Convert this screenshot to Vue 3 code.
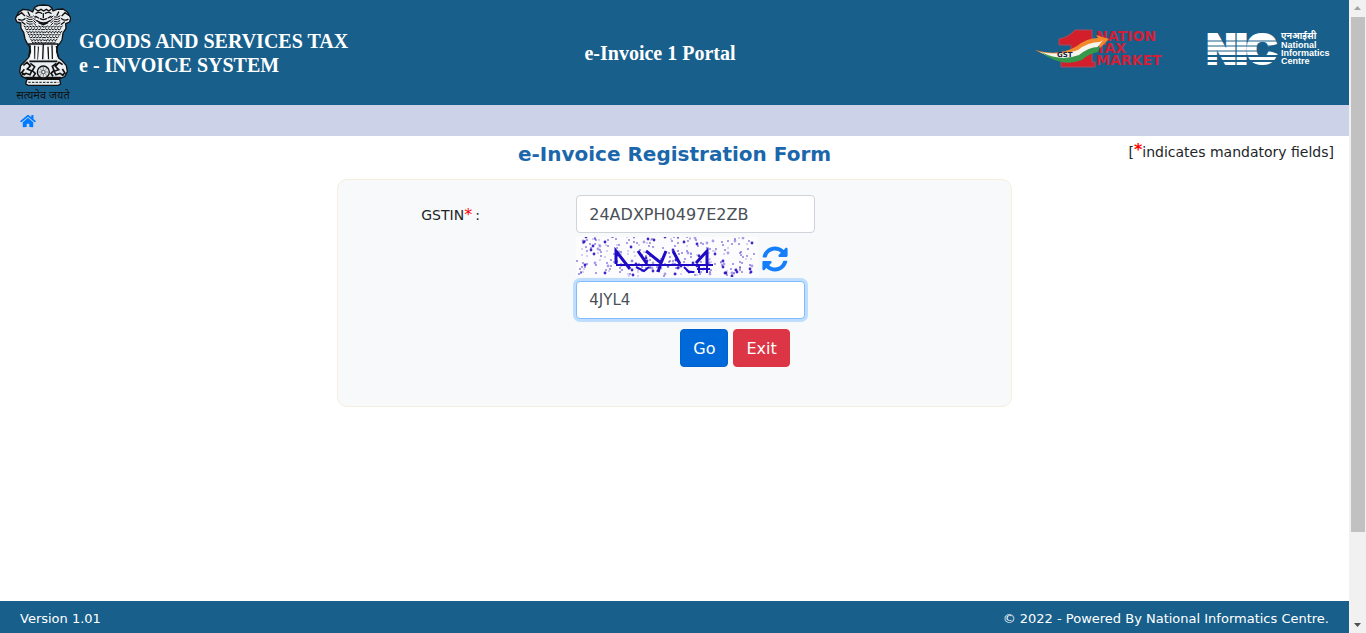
<template>
  <div class="window">
    <div class="page">
      <header class="header">
        <div class="brand">
          <!-- State emblem -->
          <svg class="emblem" viewBox="45 12 168 294" role="img" aria-label="State emblem">
            <g fill="#e9eef1" stroke="#111" stroke-width="4" stroke-linejoin="round">
              <path d="M104 22l10-5 16-2 17 2 9 7 3 9 12-5 18-1 13 9 10 18-3 12-12 5 1 14-9 14-3 21-8 12-10 8H92l-10-9-7-14-4-20-8-12-1-16-11-3-5-10 10-19 13-9 17 2 12 6z" />
              <path d="M86 132h88l-4 22 6 20 12 10 11 13 3 18-8 15-12 5H79l-14-6-6-14 3-18 13-13 11-12 6-18z" />
              <path d="M81 238h98l3 14-7 4H85l-8-4z" />
            </g>
            <!-- manes -->
            <g fill="none" stroke="#111" stroke-width="3" stroke-linecap="round">
              <path v-for="(d, i) in maneLines" :key="i" :d="d" />
            </g>
            <!-- faces -->
            <g fill="none" stroke="#111" stroke-width="4" stroke-linecap="round">
              <path d="M106 27l8 6 9-5 8 5 8-5 8 5 7-6M108 40q9-6 17 0M136 40q9-6 17 0M130 41v12M107 49l9 5M153 49l-9 5M121 56q9 6 18 0M110 62q20 14 41 0M117 69l13 5 13-5" />
              <path d="M53 46l12-8 9 9M56 58q10 6 19-2M66 66l9 7M84 36l5 10M207 46l-12-8-9 9M204 58q-10 6-19-2M193 66l-9 7M176 36l-5 10" />
            </g>
            <!-- legs -->
            <path d="M91 136l-4 34M104 137l1 40M115 140l-3 38M130 132l-2 46M144 140l2 38M156 136l1 41M169 138l5 32" fill="none" stroke="#111" stroke-width="4" />
            <path d="M98 140l-2 38M110 142l-1 36M121 140v38M137 138l1 38M150 141l1 36M163 142l1 35" fill="none" stroke="#fff" stroke-width="6" />
            <!-- abacus -->
            <path d="M70 196l11-9 10 11-9 9 13 6-5 11-12-4-12 5M73 208l-8 10 11 7M91 190l13 10-7 12 9 9-7 9M188 194l-11-7-11 12 10 10-14 5 6 10 12-4 11 7M187 207l8 12-10 8M169 190l-12 9 5 12-9 9 6 9M76 233h108M88 184h84" fill="none" stroke="#111" stroke-width="5" />
            <circle cx="130" cy="216" r="18" fill="#dfe5e8" stroke="#111" stroke-width="4" />
            <path d="M130 201v30M115 216h30M119 205l22 22M141 205l-22 22" stroke="#555" stroke-width="2" />
            <circle cx="130" cy="216" r="5" fill="#fff" stroke="#111" stroke-width="2" />
            <path d="M85 247h90" stroke="#111" stroke-width="3" stroke-dasharray="7 4" />
            <text x="129" y="298" text-anchor="middle" class="motto">सत्यमेव जयते</text>
          </svg>
          <h1 class="brand-name">
            GOODS AND SERVICES TAX<br />
            e - INVOICE SYSTEM
          </h1>
        </div>

        <h2 class="portal-name">e-Invoice 1 Portal</h2>

        <div class="logos">
          <svg class="market-logo" viewBox="0 0 160 44" role="img" aria-label="One Nation Tax Market">
            <path d="M24 13q10-2 16-9h17v32h3v5H26v-5h10V19H24z" fill="#d21f2b" stroke="#a05060" stroke-width="1" />
            <g class="market-text">
              <text x="61" y="15">NATION</text>
              <text x="61" y="27">TAX</text>
              <text x="61" y="39">MARKET</text>
            </g>
            <path d="M0 24q24 7 42-4 10-8 21-8l-2-3 13 4-9 9-2-4q-12 1-22 9-20 9-41-3z" fill="#f28a2d" />
            <path d="M5 26q22 4 38-2 10-8 22-8l3-2-6 8q-9 1-18 9-19 8-39-5z" fill="#f7f4ee" />
            <path d="M6 26q20 10 38 3 11-9 21-8l-2 5q-8 1-16 8-21 8-41-8z" fill="#35984a" />
            <text x="22" y="31" class="gst">GST</text>
          </svg>
          <svg class="nic-logo" viewBox="0 0 126 40" role="img" aria-label="National Informatics Centre">
            <text x="0" y="35" class="nic">NIC</text>
            <path d="M0 13h72M0 18h72M0 23h72" stroke="#185f8b" stroke-width="1" />
            <path d="M0 28h72M0 33h72" stroke="#185f8b" stroke-width="2" />
            <g class="nic-text">
              <text x="74" y="11" class="nic-hindi">एनआईसी</text>
              <text x="74" y="20">National</text>
              <text x="74" y="28">Informatics</text>
              <text x="74" y="36">Centre</text>
            </g>
          </svg>
        </div>
      </header>

      <nav class="navbar">
        <a href="#" aria-label="Home">
          <svg class="home-icon" viewBox="0 0 576 512">
            <path d="M280.37 148.26L96 300.11V464a16 16 0 0 0 16 16l112.06-.29a16 16 0 0 0 15.92-16V368a16 16 0 0 1 16-16h64a16 16 0 0 1 16 16v95.64a16 16 0 0 0 16 16.05L464 480a16 16 0 0 0 16-16V300L295.67 148.26a12.19 12.19 0 0 0-15.3 0zM571.6 251.47L488 182.56V44.05a12 12 0 0 0-12-12h-56a12 12 0 0 0-12 12v72.61L318.47 43a48 48 0 0 0-61 0L4.34 251.47a12 12 0 0 0-1.6 16.9l25.5 31A12 12 0 0 0 45.15 301l235.22-193.74a12.19 12.19 0 0 1 15.3 0L530.9 301a12 12 0 0 0 16.9-1.6l25.5-31a12 12 0 0 0-1.7-16.93z" />
          </svg>
        </a>
      </nav>

      <main class="main">
        <div class="title-row">
          <h3 class="title">e-Invoice Registration Form</h3>
          <p class="hint">[<span class="star">*</span>indicates mandatory fields]</p>
        </div>

        <form class="panel" @submit.prevent>
          <label for="gstin" class="label">GSTIN<span class="required">*</span>:</label>
          <div class="fields">
            <input id="gstin" v-model="gstin" type="text" class="input" />

            <!-- Captcha -->
            <div class="captcha-row">
              <svg class="captcha" viewBox="0 0 182 40" role="img" aria-label="Captcha">
                <rect width="182" height="40" fill="#fcfcff" />
                <circle v-for="(dot, i) in dots" :key="i" :cx="dot.x" :cy="dot.y" :r="dot.r" :opacity="dot.o" fill="#2a0fc0" />
                <g fill="none" stroke="#1f0bc4" stroke-width="3">
                  <path d="M40 27V14l14 18M62 14l9 13M70 14l15 12 5-12M85 26l-3 9M97 14l7 13M120 26l11-12v14" />
                  <path d="M60 30l8 4 5-4M108 30l5 5h5M123 28v8M131 28v8M121 32h13" stroke-width="2" />
                  <path d="M40 28h97" stroke-width="2" />
                </g>
              </svg>
              <button type="button" class="refresh" aria-label="Refresh captcha" @click="seed++">
                <svg viewBox="0 0 512 512">
                  <path d="M370.72 133.28C339.458 104.008 298.888 87.962 255.848 88c-77.458.068-144.328 53.178-162.791 126.85-1.344 5.363-6.122 9.15-11.651 9.15H24.103c-7.498 0-13.194-6.807-11.807-14.176C33.933 94.924 134.813 8 256 8c66.448 0 126.791 26.136 171.315 68.685L463.03 40.97C478.149 25.851 504 36.559 504 57.941V192c0 13.255-10.745 24-24 24H345.941c-21.382 0-32.09-25.851-16.971-40.971l41.75-41.749zM32 296h134.059c21.382 0 32.09 25.851 16.971 40.971l-41.75 41.75c31.262 29.273 71.835 45.319 114.876 45.28 77.418-.07 144.315-53.144 162.787-126.849 1.344-5.363 6.122-9.15 11.651-9.15h57.304c7.498 0 13.194 6.807 11.807 14.176C478.067 417.076 377.187 504 256 504c-66.448 0-126.791-26.136-171.315-68.685L48.97 471.03C33.851 486.149 8 475.441 8 454.059V320c0-13.255 10.745-24 24-24z" />
                </svg>
              </button>
            </div>

            <input v-model="captcha" type="text" class="input input-captcha" aria-label="Captcha code" />

            <div class="actions">
              <button type="submit" class="btn btn-go">Go</button>
              <button type="button" class="btn btn-exit">Exit</button>
            </div>
          </div>
        </form>
      </main>

      <footer class="footer">
        <span>Version 1.01</span>
        <span>© 2022 - Powered By National Informatics Centre.</span>
      </footer>
    </div>

    <!-- Scrollbar -->
    <div class="scrollbar" aria-hidden="true">
      <svg class="arrow" viewBox="0 0 17 17"><path d="M5 10h7L8.500 6z" fill="#a3a3a3" /></svg>
      <div class="track">
        <div class="thumb"></div>
      </div>
      <svg class="arrow" viewBox="0 0 17 17"><path d="M5 7h7l-3.500 4z" fill="#505050" /></svg>
    </div>
  </div>
</template>

<script setup>
import { ref, computed } from "vue";

const gstin = ref("24ADXPH0497E2ZB");
const captcha = ref("4JYL4");
const seed = ref(7);

// Captcha background noise
const dots = computed(() => {
  let s = seed.value;
  const next = () => {
    s = (s * 16807) % 2147483647;
    return s / 2147483647;
  };
  for (let i = 0; i < 5; i++) next();
  return Array.from({ length: 290 }, () => ({
    x: 1 + Math.round(next() * 180),
    y: Math.round(next() * 39),
    r: next() > 0.75 ? 1.4 : 0.8,
    o: next() > 0.4 ? 0.9 : 0.4,
  }));
});

// Rows of short curls for the lions' manes
const maneLines = [];
for (let row = 0; row < 7; row++) {
  const y = 78 + row * 8;
  const half = 58 - row * 4;
  for (let x = 130 - half; x < 130 + half; x += 9) {
    maneLines.push(x < 130 ? `M${x} ${y}q2 6 7 3` : `M${x + 7} ${y}q-2 6-7 3`);
  }
}
for (let y = 48; y < 76; y += 7) {
  maneLines.push(`M80 ${y}q6 6 17 3M180 ${y}q-6 6-17 3M101 ${y}l6 6M159 ${y}l-6 6`);
}
</script>

<style>
body {
  margin: 0;
}
</style>

<style scoped>
* {
  box-sizing: border-box;
}

.window {
  display: flex;
  min-height: 100vh;
  font-family: Verdana, "DejaVu Sans", sans-serif;
  font-size: 14px;
  color: #212529;
  background: #fff;
}

.page {
  flex: 1;
  display: flex;
  flex-direction: column;
}

h1, h2, h3, p {
  margin: 0;
}

.header {
  display: grid;
  grid-template-columns: 1fr auto 1fr;
  align-items: center;
  height: 105px;
  padding: 1px 20px 0 15px;
  background: #185f8b;
  color: #fff;
}

.brand {
  display: flex;
  align-items: center;
  gap: 8px;
}

.emblem {
  width: 56px;
  height: 98px;
}

.motto {
  font-family: "Noto Sans", sans-serif;
  font-size: 33px;
  fill: #111;
}

.brand-name,
.portal-name {
  font-family: "Liberation Serif", serif;
  font-size: 20px;
  font-weight: bold;
  line-height: 24px;
}

.portal-name {
  padding-right: 24px;
}

.logos {
  display: flex;
  justify-content: flex-end;
  align-items: center;
  gap: 12px;
  padding-bottom: 10px;
}

.market-logo {
  width: 160px;
  height: 44px;
}

.market-text {
  font-family: "DejaVu Sans", sans-serif;
  font-size: 14px;
  font-weight: bold;
  fill: #d21f38;
}

.gst {
  font-family: "DejaVu Sans", sans-serif;
  font-size: 7px;
  font-weight: bold;
  fill: #17203d;
}

.nic-logo {
  width: 126px;
  height: 40px;
  margin-right: -4px;
}

.nic {
  font-family: "Liberation Sans", sans-serif;
  font-size: 40px;
  font-weight: bold;
  fill: #fff;
  stroke: #fff;
  stroke-width: 4px;
}

.nic-text {
  font-family: "Liberation Sans", sans-serif;
  font-size: 9px;
  font-weight: bold;
  fill: #fff;
}

.nic-hindi {
  font-family: "Noto Sans", sans-serif;
}

.navbar {
  display: flex;
  align-items: center;
  height: 31px;
  padding: 0 20px;
  background: #ccd3e9;
}

.navbar a {
  display: flex;
}

.home-icon {
  width: 16px;
  height: 14px;
  fill: #007bff;
}

.main {
  flex: 1;
}

.title-row {
  display: grid;
  grid-template-columns: 1fr auto 1fr;
  align-items: start;
  padding: 6px 15px 13px;
}

.title {
  grid-column: 2;
  font-size: 20px;
  line-height: 24px;
  font-weight: bold;
  color: #1b67ab;
}

.hint {
  text-align: right;
  line-height: 21px;
}

.star,
.required {
  color: red;
  font-size: 16px;
  line-height: 16px;
}

.star {
  font-weight: bold;
  vertical-align: 2px;
}

.required {
  padding-right: 3px;
}

.panel {
  display: grid;
  grid-template-columns: 155px 1fr;
  align-items: start;
  width: 50%;
  min-height: 228px;
  margin: 0 auto;
  padding: 15px 83px;
  border: 1px solid #f3efdc;
  border-radius: 10px;
  background: #f8f9fb;
}

.label {
  padding-top: 10px;
  line-height: 21px;
}

.fields {
  display: flex;
  flex-direction: column;
  align-items: flex-start;
}

.input {
  width: 239px;
  height: 38px;
  padding: 6px 12px;
  border: 1px solid #ced4da;
  border-radius: 4px;
  background: #fff;
  color: #495057;
  font-family: inherit;
  font-size: 16px;
  outline: none;
}

.input-captcha {
  width: 229px;
  border-color: #80bdff;
  box-shadow: 0 0 0 3px #bfdeff;
  font-size: 15px;
}

.captcha-row {
  display: flex;
  align-items: flex-end;
  gap: 4px;
  padding: 4px 0;
}

.captcha {
  width: 182px;
  height: 40px;
}

.refresh {
  display: flex;
  padding: 0 0 5px;
  border: 0;
  background: none;
  cursor: pointer;
}

.refresh svg {
  width: 26px;
  height: 26px;
  fill: #157efb;
}

.actions {
  display: flex;
  gap: 5px;
  padding: 10px 0 0 104px;
}

.btn {
  height: 38px;
  padding: 0 12px;
  border: 1px solid;
  border-radius: 4px;
  color: #fff;
  font-family: inherit;
  font-size: 16px;
  cursor: pointer;
}

.btn-go {
  background: #0069d9;
  border-color: #0062cc;
}

.btn-exit {
  background: #dc3545;
  border-color: #dc3545;
}

.footer {
  display: flex;
  justify-content: space-between;
  align-items: center;
  height: 32px;
  padding: 2px 20px 0;
  background: #185f8b;
  color: #fff;
  font-size: 13px;
}

.scrollbar {
  display: flex;
  flex-direction: column;
  width: 17px;
  background: #f1f1f1;
}

.arrow {
  width: 17px;
  height: 17px;
}

.track {
  flex: 1;
  padding: 0 1px 0 2px;
}

.thumb {
  height: 86%;
  background: #c1c1c1;
}
</style>
